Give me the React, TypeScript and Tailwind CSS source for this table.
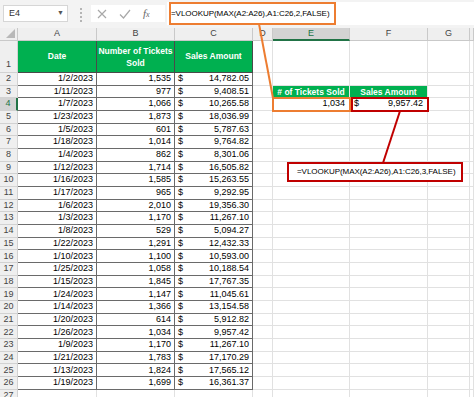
import type { ReactNode } from 'react';

const rows: [string, string, string][] = [
  ['1/2/2023', '1,535', '14,782.05'],
  ['1/11/2023', '977', '9,408.51'],
  ['1/7/2023', '1,066', '10,265.58'],
  ['1/23/2023', '1,873', '18,036.99'],
  ['1/5/2023', '601', '5,787.63'],
  ['1/18/2023', '1,014', '9,764.82'],
  ['1/4/2023', '862', '8,301.06'],
  ['1/12/2023', '1,714', '16,505.82'],
  ['1/16/2023', '1,585', '15,263.55'],
  ['1/17/2023', '965', '9,292.95'],
  ['1/6/2023', '2,010', '19,356.30'],
  ['1/3/2023', '1,170', '11,267.10'],
  ['1/8/2023', '529', '5,094.27'],
  ['1/22/2023', '1,291', '12,432.33'],
  ['1/10/2023', '1,100', '10,593.00'],
  ['1/25/2023', '1,058', '10,188.54'],
  ['1/15/2023', '1,845', '17,767.35'],
  ['1/24/2023', '1,147', '11,045.61'],
  ['1/14/2023', '1,366', '13,154.58'],
  ['1/20/2023', '614', '5,912.82'],
  ['1/26/2023', '1,034', '9,957.42'],
  ['1/9/2023', '1,170', '11,267.10'],
  ['1/21/2023', '1,783', '17,170.29'],
  ['1/13/2023', '1,824', '17,565.12'],
  ['1/19/2023', '1,699', '16,361.37'],
];

const letters = ['A', 'B', 'C', 'D', 'E', 'F', 'G', ''];

function Grid({ children }: { children: ReactNode }) {
  return <div className="border-r border-b border-[#e1e1e1] bg-white">{children}</div>;
}

function Td({ children, className = '' }: { children?: ReactNode; className?: string }) {
  return (
    <div className={`border-r border-b border-[#6a6a6a] bg-white flex items-center text-[9px] text-black px-[3px] ${className}`}>
      {children}
    </div>
  );
}

function Money({ value }: { value: string }) {
  return (
    <Td className="justify-between">
      <span>$</span>
      <span>{value}</span>
    </Td>
  );
}

function RowHead({ n }: { n: number }) {
  const sel = n === 4;
  return (
    <div
      className={`border-b border-[#d2d2d2] flex justify-center text-[9px] ${n === 1 ? 'items-end pb-[1px]' : 'items-center'} ${
        sel ? 'bg-[#d3d3d3] text-[#217346] border-r-2 border-r-[#217346]' : 'bg-[#efefef] text-[#444] border-r border-r-[#d2d2d2]'
      }`}
    >
      {n}
    </div>
  );
}

export default function App() {
  return (
    <div className="relative w-[474px] h-[397px] overflow-hidden bg-white font-['Liberation_Sans',Arial,sans-serif]">
      {/* Formula bar */}
      <div className="flex items-start h-[28px] bg-[#f3f3f3]">
        <div className="ml-[3px] mt-[5px] w-[65px] h-[17px] bg-white border border-[#d6d6d6] flex items-center justify-between pl-[5px] pr-[3px] text-[9px] text-[#333]">
          <span>E4</span>
          <span className="text-[7px] text-[#555]">▼</span>
        </div>
        <div className="ml-[12px] mt-[8px] flex flex-col gap-[2px]">
          <span className="w-[2px] h-[2px] bg-[#b5b5b5]" />
          <span className="w-[2px] h-[2px] bg-[#b5b5b5]" />
          <span className="w-[2px] h-[2px] bg-[#b5b5b5]" />
          <span className="w-[2px] h-[2px] bg-[#b5b5b5]" />
        </div>
        <div className="ml-[9px] mt-[5px] w-[74px] h-[17px] bg-white flex items-center">
          <svg width="10" height="10" viewBox="0 0 10 10" className="ml-[6px]">
            <path d="M1 1 L9 9 M9 1 L1 9" stroke="#a8a8a8" strokeWidth="1.2" fill="none" />
          </svg>
          <svg width="12" height="10" viewBox="0 0 12 10" className="ml-[12px]">
            <path d="M1 5.5 L4.5 9 L11 1" stroke="#a8a8a8" strokeWidth="1.2" fill="none" />
          </svg>
          <span className="ml-[12px] font-['Liberation_Serif',serif] italic text-[11px] text-[#666] leading-none">
            f<span className="text-[8px]">x</span>
          </span>
        </div>
        <div className="ml-[2px] mt-[2px] flex-1 h-[23px] bg-white flex items-center pl-[4px] text-[8px] tracking-[-0.05px] text-black">
          =VLOOKUP(MAX(A2:A26),A1:C26,2,FALSE)
        </div>
      </div>

      {/* Sheet */}
      <div className="grid grid-cols-[18px_79px_78px_78px_20px_77px_78px_42px_1fr] grid-rows-[13px_32px_repeat(26,12.68px)]">
        {/* column headers */}
        <div className="relative bg-[#efefef] border-r border-b border-[#c9c9c9]">
          <div className="absolute right-[2px] bottom-[2px] w-0 h-0 border-l-[9px] border-l-transparent border-b-[9px] border-b-[#b8b8b8]" />
        </div>
        {letters.map((l, i) => (
          <div
            key={i}
            className={`flex items-center justify-center text-[9px] border-r border-[#c9c9c9] ${
              l === 'E' ? 'bg-[#d3d3d3] text-[#217346] border-b-2 border-b-[#217346]' : 'bg-[#efefef] text-[#444] border-b'
            }`}
          >
            {l}
          </div>
        ))}

        {/* row 1 */}
        <RowHead n={1} />
        <div className="bg-[#00b050] border-r border-b border-[#4a4a4a] flex items-center justify-center text-white font-bold text-[8.5px]">Date</div>
        <div className="bg-[#00b050] border-r border-b border-[#4a4a4a] flex items-center justify-center text-center text-white font-bold text-[8.5px] leading-[12px]">
          Number of Tickets
          <br />
          Sold
        </div>
        <div className="bg-[#00b050] border-r border-b border-[#4a4a4a] flex items-center justify-center text-white font-bold text-[8.5px]">Sales Amount</div>
        <Grid />
        <Grid />
        <Grid />
        <Grid />
        <Grid />

        {rows.map((r, i) => {
          const n = i + 2;
          return [
            <RowHead key={`h${n}`} n={n} />,
            <Td key={`a${n}`} className="justify-end">{r[0]}</Td>,
            <Td key={`b${n}`} className="justify-end">{r[1]}</Td>,
            <Money key={`c${n}`} value={r[2]} />,
            <Grid key={`d${n}`} />,
            n === 3 ? (
              <div key={`e${n}`} className="bg-[#00b050] border-r border-[#e8e8e8] flex items-center justify-center text-white font-bold text-[8.5px]">
                # of Tickets Sold
              </div>
            ) : n === 4 ? (
              <div key={`e${n}`} className="border-r border-b border-[#e1e1e1] flex items-center justify-end pr-[4px] text-[9px]">1,034</div>
            ) : (
              <Grid key={`e${n}`} />
            ),
            n === 3 ? (
              <div key={`f${n}`} className="bg-[#00b050] border-r border-[#e8e8e8] flex items-center justify-center text-white font-bold text-[8.5px]">
                Sales Amount
              </div>
            ) : n === 4 ? (
              <div key={`f${n}`} className="border-r border-b border-[#e1e1e1] flex items-center justify-between px-[4px] text-[9px]">
                <span>$</span>
                <span>9,957.42</span>
              </div>
            ) : (
              <Grid key={`f${n}`} />
            ),
            <Grid key={`g${n}`} />,
            <Grid key={`x${n}`} />,
          ];
        })}

        {/* row 27 */}
        <RowHead n={27} />
        {letters.map((_, i) => (
          <Grid key={`r27${i}`} />
        ))}
      </div>

      {/* Annotations */}
      <svg className="absolute inset-0 pointer-events-none" width="474" height="397">
        <line x1="259" y1="24" x2="273" y2="98" stroke="#ed7d31" strokeWidth="2" />
        <line x1="400" y1="111" x2="383" y2="163" stroke="#c00000" strokeWidth="2" />
      </svg>
      <div className="absolute left-[169px] top-[2px] w-[167px] h-[23px] border-2 border-[#ed7d31]" />
      <div className="absolute left-[272px] top-[97px] w-[79px] h-[15px] border-2 border-[#ed7d31]" />
      <div className="absolute left-[351px] top-[97px] w-[78px] h-[15px] border-2 border-[#c00000]" />
      <div className="absolute left-[287px] top-[162px] w-[176px] h-[20px] border-2 border-[#c00000] bg-white flex items-center pl-[8px] text-[8px] tracking-[-0.05px] text-black">
        =VLOOKUP(MAX(A2:A26),A1:C26,3,FALSE)
      </div>
    </div>
  );
}
